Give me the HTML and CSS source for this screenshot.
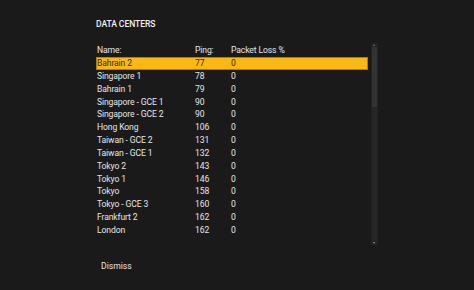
FILE: index.html
```html
<!DOCTYPE html>
<html>
<head>
<meta charset="utf-8">
<link rel="stylesheet" href="styles.css">
</head>
<body>
<div class="page">
  <div class="title">DATA CENTERS</div>
  <div class="panel">
    <div class="table">
      <div class="row head"><span class="c-name">Name:</span><span class="c-ping">Ping:</span><span class="c-loss">Packet Loss %</span></div>
      <div class="row sel"><span class="c-name">Bahrain 2</span><span class="c-ping">77</span><span class="c-loss">0</span></div>
      <div class="row"><span class="c-name">Singapore 1</span><span class="c-ping">78</span><span class="c-loss">0</span></div>
      <div class="row"><span class="c-name">Bahrain 1</span><span class="c-ping">79</span><span class="c-loss">0</span></div>
      <div class="row"><span class="c-name">Singapore - GCE 1</span><span class="c-ping">90</span><span class="c-loss">0</span></div>
      <div class="row"><span class="c-name">Singapore - GCE 2</span><span class="c-ping">90</span><span class="c-loss">0</span></div>
      <div class="row"><span class="c-name">Hong Kong</span><span class="c-ping">106</span><span class="c-loss">0</span></div>
      <div class="row"><span class="c-name">Taiwan - GCE 2</span><span class="c-ping">131</span><span class="c-loss">0</span></div>
      <div class="row"><span class="c-name">Taiwan - GCE 1</span><span class="c-ping">132</span><span class="c-loss">0</span></div>
      <div class="row"><span class="c-name">Tokyo 2</span><span class="c-ping">143</span><span class="c-loss">0</span></div>
      <div class="row"><span class="c-name">Tokyo 1</span><span class="c-ping">146</span><span class="c-loss">0</span></div>
      <div class="row"><span class="c-name">Tokyo</span><span class="c-ping">158</span><span class="c-loss">0</span></div>
      <div class="row"><span class="c-name">Tokyo - GCE 3</span><span class="c-ping">160</span><span class="c-loss">0</span></div>
      <div class="row"><span class="c-name">Frankfurt 2</span><span class="c-ping">162</span><span class="c-loss">0</span></div>
      <div class="row"><span class="c-name">London</span><span class="c-ping">162</span><span class="c-loss">0</span></div>
    </div>
    <div class="scrollbar">
      <div class="arrow up"></div>
      <div class="thumb"></div>
      <div class="track"></div>
      <div class="arrow down"></div>
    </div>
  </div>
  <div class="dismiss">Dismiss</div>
</div>
</body>
</html>
```
FILE: styles.css
```css
html, body {
  margin: 0;
  padding: 0;
  background: #1a1a1a;
  width: 474px;
  height: 290px;
  overflow: hidden;
  font-family: "Roboto", "Liberation Sans", sans-serif;
  color: #e6e6e6;
}
.page {
  padding: 18px 0 0 96px;
}
.title {
  font-size: 8.6px;
  font-weight: 500;
  line-height: 12px;
  color: #f2f2f2;
  letter-spacing: -0.1px;
}
.panel {
  display: flex;
  margin-top: 13px;
}
.table {
  width: 272px;
}
.row {
  display: flex;
  height: 12.85px;
  line-height: 12.85px;
  font-size: 8.6px;
  letter-spacing: -0.12px;
  white-space: nowrap;
}
.row.head {
  height: 14px;
  line-height: 14px;
}
.row.sel {
  background: #fcb812;
  box-shadow: inset 0 0 0 1px #b37f00;
  color: #3b2800;
}
.c-name {
  width: 98px;
  padding-left: 1px;
}
.c-ping {
  width: 36px;
}
.c-loss {
  flex: 1;
}
.scrollbar {
  width: 7px;
  margin-left: 3px;
  height: 202px;
  display: flex;
  flex-direction: column;
  background: #222;
}
.arrow {
  height: 4px;
  position: relative;
}
.arrow::after {
  content: "";
  position: absolute;
  left: 2px;
  top: 1px;
  border-left: 1.5px solid transparent;
  border-right: 1.5px solid transparent;
}
.arrow.up::after {
  border-bottom: 2px solid #777;
}
.arrow.down::after {
  border-top: 2px solid #999;
}
.thumb {
  height: 60px;
  background: #333;
  margin: 0 1px;
}
.track {
  flex: 1;
  background: #262626;
  margin: 0 1px;
}
.dismiss {
  margin-top: 15px;
  padding-left: 5px;
  font-size: 8.6px;
  line-height: 12px;
  color: #e6e6e6;
}
```
